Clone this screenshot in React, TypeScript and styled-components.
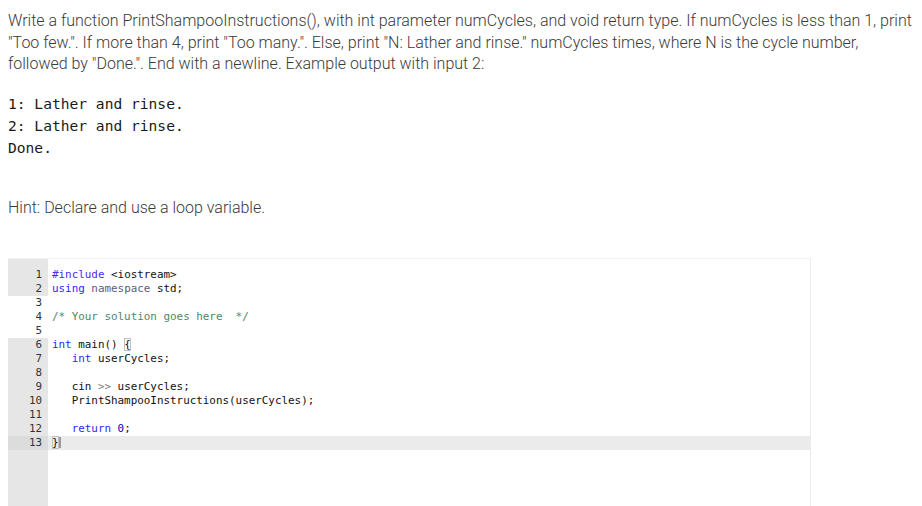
import React from "react";
import styled, { createGlobalStyle } from "styled-components";

const Global = createGlobalStyle`
  html, body { margin: 0; padding: 0; background: #ffffff; }
  body { font-family: Roboto, "Noto Sans", Arial, sans-serif; }
`;

const Page = styled.div`
  padding: 10px 8px 0 8px;
  display: flex;
  flex-direction: column;
`;

const Prose = styled.p`
  margin: 0;
  font-family: Roboto, Arial, sans-serif;
  font-size: 16px;
  font-weight: 300;
  line-height: 21.7px;
  color: #3a3a3a;
`;

const Sample = styled.pre`
  margin: 18px 0 0 0;
  font-family: "DejaVu Sans Mono", "Liberation Mono", monospace;
  font-size: 14.6px;
  line-height: 22px;
  color: #1a1a1a;
`;

const Hint = styled(Prose)`
  margin-top: 38px;
`;

const Editor = styled.div`
  margin-top: 39px;
  width: 803px;
  height: 260px;
  display: flex;
  background: #ffffff;
  border-top: 1px solid #f2f2f2;
  border-right: 1px solid #ececec;
  box-sizing: border-box;
  font-family: "DejaVu Sans Mono", "Liberation Mono", monospace;
  font-size: 10.9px;
  line-height: 14px;
`;

const Gutter = styled.div`
  width: 40px;
  flex: none;
  background: #e6e6e6;
  padding-top: 9px;
  display: flex;
  flex-direction: column;
`;

const LineNo = styled.div<{ $tone: "ro" | "edit" | "active" }>`
  height: 14px;
  text-align: right;
  padding-right: 6px;
  color: #333333;
  background: ${(p) =>
    p.$tone === "edit" ? "#ffffff" : p.$tone === "active" ? "#dcdcdc" : "#e6e6e6"};
`;

const Code = styled.div`
  flex: 1;
  padding-top: 9px;
  display: flex;
  flex-direction: column;
`;

const Line = styled.div<{ $active?: boolean }>`
  height: 14px;
  padding-left: 4px;
  white-space: pre;
  color: #111111;
  background: ${(p) => (p.$active ? "#ebebeb" : "transparent")};
`;

const Kw = styled.span`
  color: #2a2aff;
`;
const Pre = styled.span`
  color: #4b2bf5;
`;
const Ns = styled.span`
  color: #5c5c78;
`;
const Cm = styled.span`
  color: #4c886b;
`;
const Op = styled.span`
  color: #7a7a7a;
`;
const Num = styled.span`
  color: #0000cd;
`;
const Brace = styled.span<{ $cursor?: boolean }>`
  outline: 1px solid #c0c0c0;
  outline-offset: -1px;
  ${(p) => (p.$cursor ? "box-shadow: 3px 0 0 -1px #9a9a9a;" : "")}
`;

type Tone = "ro" | "edit" | "active";

const lines: { tone: Tone; content: React.ReactNode; active?: boolean }[] = [
  { tone: "ro", content: <><Pre>#include</Pre> &lt;iostream&gt;</> },
  { tone: "ro", content: <><Kw>using</Kw> <Ns>namespace</Ns> std;</> },
  { tone: "edit", content: "" },
  { tone: "edit", content: <Cm>/* Your solution goes here  */</Cm> },
  { tone: "edit", content: "" },
  { tone: "ro", content: <><Kw>int</Kw> main() <Brace>{"{"}</Brace></> },
  { tone: "ro", content: <>   <Kw>int</Kw> userCycles;</> },
  { tone: "ro", content: "" },
  { tone: "ro", content: <>   cin <Op>&gt;&gt;</Op> userCycles;</> },
  { tone: "ro", content: <>   PrintShampooInstructions(userCycles);</> },
  { tone: "ro", content: "" },
  { tone: "ro", content: <>   <Kw>return</Kw> <Num>0</Num>;</> },
  { tone: "active", content: <Brace $cursor>{"}"}</Brace>, active: true },
];

export default function App() {
  return (
    <>
      <Global />
      <Page>
        <Prose>
          Write a function PrintShampooInstructions(), with int parameter numCycles, and void return type. If numCycles is less than 1, print "Too few.". If more than 4, print "Too many.". Else, print "N: Lather and rinse." numCycles times, where N is the cycle number, followed by "Done.". End with a newline. Example output with input 2:
        </Prose>
        <Sample>{"1: Lather and rinse.\n2: Lather and rinse.\nDone."}</Sample>
        <Hint>Hint: Declare and use a loop variable.</Hint>
        <Editor>
          <Gutter>
            {lines.map((l, i) => (
              <LineNo key={i} $tone={l.tone}>
                {i + 1}
              </LineNo>
            ))}
          </Gutter>
          <Code>
            {lines.map((l, i) => (
              <Line key={i} $active={l.active}>
                {l.content}
              </Line>
            ))}
          </Code>
        </Editor>
      </Page>
    </>
  );
}
